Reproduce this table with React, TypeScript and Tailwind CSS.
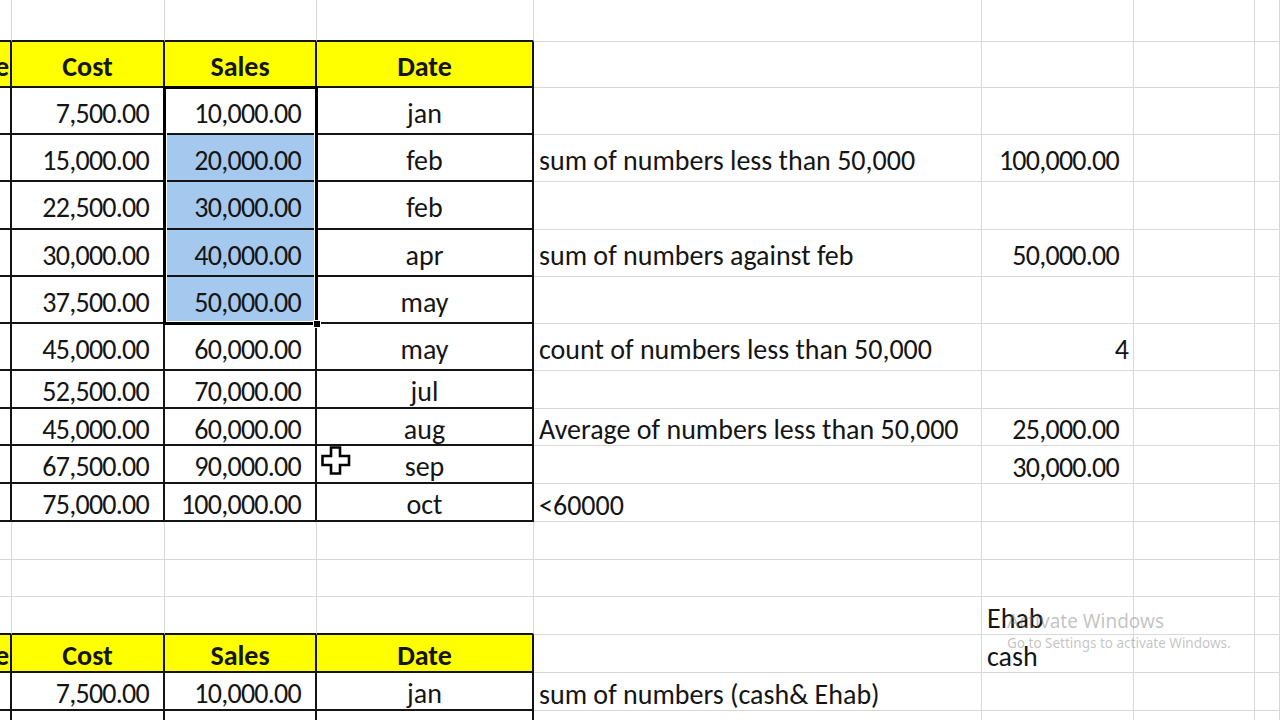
import React from "react";

type Cell = {
  text: string;
  align: "left" | "right" | "center" | "clip";
  bold?: boolean;
  pad?: string;
};

const rowHeights = [3, 39, 46, 47, 47, 48, 47, 47, 47, 38, 37, 38, 38, 38, 37, 38, 38, 38, 20];
const NCOLS = 8;

const cost = ["7,500.00", "15,000.00", "22,500.00", "30,000.00", "37,500.00", "45,000.00", "52,500.00", "45,000.00", "67,500.00", "75,000.00"];
const sales = ["10,000.00", "20,000.00", "30,000.00", "40,000.00", "50,000.00", "60,000.00", "70,000.00", "60,000.00", "90,000.00", "100,000.00"];
const dates = ["jan", "feb", "feb", "apr", "may", "may", "jul", "aug", "sep", "oct"];

const cells: Record<string, Cell> = {};
const setHeader = (r: number) => {
  cells[`${r}-0`] = { text: "Name", align: "clip", bold: true };
  cells[`${r}-1`] = { text: "Cost", align: "center", bold: true };
  cells[`${r}-2`] = { text: "Sales", align: "center", bold: true };
  cells[`${r}-3`] = { text: "Date", align: "center", bold: true };
};
setHeader(2);
setHeader(16);
for (let i = 0; i < 10; i++) {
  const r = 3 + i;
  cells[`${r}-1`] = { text: cost[i], align: "right", pad: "num" };
  cells[`${r}-2`] = { text: sales[i], align: "right", pad: "num" };
  cells[`${r}-3`] = { text: dates[i], align: "center" };
}
cells["17-1"] = { text: "7,500.00", align: "right", pad: "num" };
cells["17-2"] = { text: "10,000.00", align: "right", pad: "num" };
cells["17-3"] = { text: "jan", align: "center" };

cells["4-4"] = { text: "sum of numbers less than 50,000", align: "left" };
cells["6-4"] = { text: "sum of numbers against feb", align: "left" };
cells["8-4"] = { text: "count of numbers less than 50,000", align: "left" };
cells["10-4"] = { text: "Average of numbers less than 50,000", align: "left" };
cells["12-4"] = { text: "<60000", align: "left" };
cells["17-4"] = { text: "sum of numbers (cash& Ehab)", align: "left" };

cells["4-5"] = { text: "100,000.00", align: "right", pad: "num" };
cells["6-5"] = { text: "50,000.00", align: "right", pad: "num" };
cells["8-5"] = { text: "4", align: "right" };
cells["10-5"] = { text: "25,000.00", align: "right", pad: "num" };
cells["11-5"] = { text: "30,000.00", align: "right", pad: "num" };
cells["15-5"] = { text: "Ehab", align: "left" };
cells["16-5"] = { text: "cash", align: "left" };

const inTable = (r: number, c: number) =>
  c >= 0 && c <= 3 && ((r >= 2 && r <= 12) || r >= 16);
const isHeader = (r: number, c: number) => (r === 2 || r === 16) && c <= 3;
const isBlue = (r: number, c: number) => c === 2 && r >= 4 && r <= 7;

function GridCell({ r, c }: { r: number; c: number }) {
  const cell = cells[`${r}-${c}`];
  const right = inTable(r, c) || inTable(r, c + 1)
    ? "border-r-2 border-r-[#141414]"
    : "border-r border-r-[#d8d8d8]";
  const bottom = inTable(r, c) || inTable(r + 1, c)
    ? "border-b-2 border-b-[#141414]"
    : "border-b border-b-[#d8d8d8]";
  const bg = isHeader(r, c) ? "bg-[#ffff00]" : isBlue(r, c) ? "bg-[#a5c9ee]" : "bg-white";
  let justify = "justify-start pl-[5px]";
  if (cell) {
    if (cell.align === "center") justify = "justify-center";
    else if (cell.align === "right") justify = cell.pad === "num" ? "justify-end pr-[14px]" : "justify-end pr-[4px]";
    else if (cell.align === "clip") justify = "justify-end pr-[1px]";
  }
  const tracking = cell && cell.pad === "num" ? "tracking-[-0.75px]" : "tracking-normal";
  return (
    <div className={`flex items-center overflow-hidden whitespace-nowrap pt-[6px] ${right} ${bottom} ${bg} ${justify}`}>
      {cell ? (
        <span className={`text-[28px] leading-[1.2] text-[#151515] ${tracking} ${cell.bold ? "font-bold" : "font-normal"}`}>
          {cell.text}
        </span>
      ) : null}
    </div>
  );
}

export default function App() {
  const all: React.ReactNode[] = [];
  rowHeights.forEach((_, r) => {
    for (let c = 0; c < NCOLS; c++) all.push(<GridCell key={`${r}-${c}`} r={r} c={c} />);
  });
  return (
    <div
      className="relative w-[1280px] h-[720px] overflow-hidden bg-white"
      style={{ fontFamily: "Carlito, Lato, 'Open Sans', sans-serif" }}
    >
      <div className="grid grid-cols-[12px_153px_152px_217px_448px_152px_121px_25px] grid-rows-[3px_39px_46px_47px_47px_48px_47px_47px_47px_38px_37px_38px_38px_38px_37px_38px_38px_38px_20px]">
        {all}
      </div>

      {/* selection outline */}
      <div className="absolute left-[163px] top-[86px] w-[155px] h-[239px] border-[3px] border-black shadow-[inset_0_0_0_1px_#ffffff] pointer-events-none" />
      {/* fill handle */}
      <div className="absolute left-[313px] top-[320px] w-[8px] h-[8px] bg-black border border-white" />

      {/* cursor */}
      <svg className="absolute left-[321px] top-[446px]" width="30" height="29" viewBox="0 0 30 29">
        <path d="M10 1.5 H19 V10 H28 V19 H19 V27.5 H10 V19 H1.5 V10 H10 Z" fill="#ffffff" stroke="#000000" strokeWidth="2.6" strokeLinejoin="miter" />
      </svg>

      {/* watermark */}
      <div className="absolute left-[1007px] top-[608px] pointer-events-none" style={{ fontFamily: "'Noto Sans', 'Open Sans', sans-serif" }}>
        <div className="text-[19px] leading-[26px] text-[rgba(120,120,120,0.45)]">Activate Windows</div>
        <div className="text-[13.5px] leading-[18px] text-[rgba(120,120,120,0.45)]">Go to Settings to activate Windows.</div>
      </div>
    </div>
  );
}
